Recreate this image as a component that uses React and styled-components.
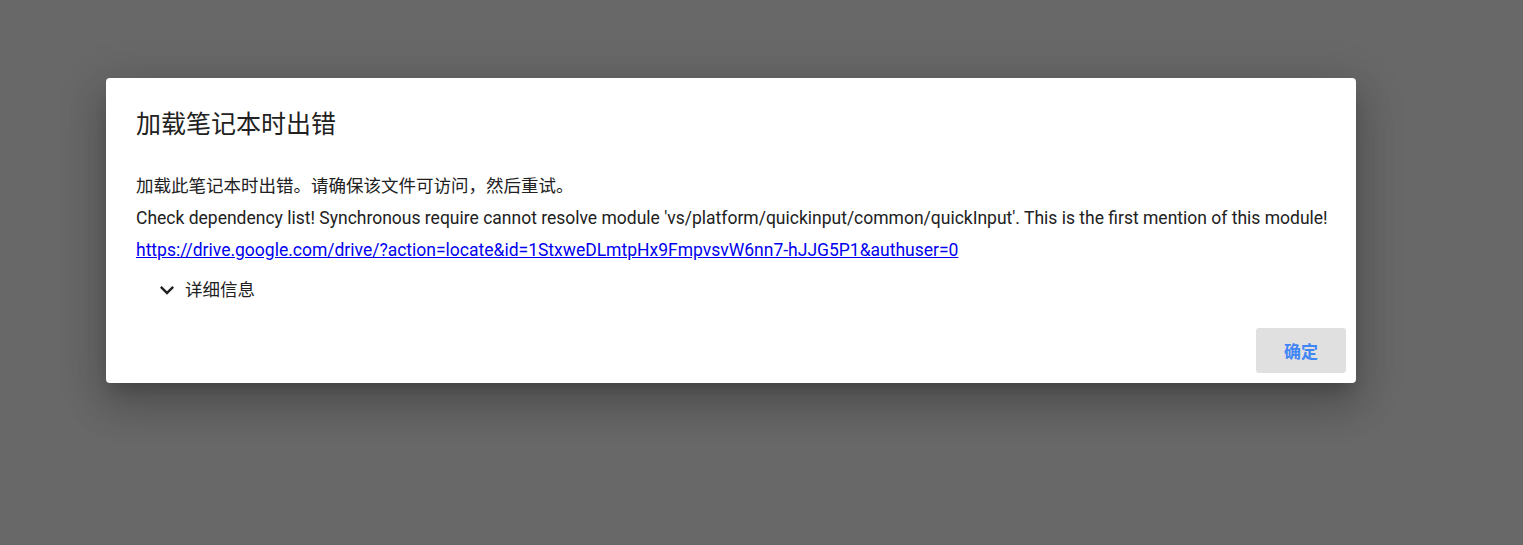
import React from "react";
import styled, { createGlobalStyle } from "styled-components";

const GlobalStyle = createGlobalStyle`
  html, body {
    margin: 0;
    padding: 0;
    background: #686868;
    font-family: Roboto, "Noto Sans CJK SC", sans-serif;
  }
`;

const Backdrop = styled.div`
  width: 1523px;
  height: 545px;
  padding: 78px 0 0 106px;
  box-sizing: border-box;
`;

const Dialog = styled.div`
  width: 1250px;
  height: 305px;
  box-sizing: border-box;
  background: #fff;
  border-radius: 4px;
  box-shadow: 0 24px 38px 3px rgba(0, 0, 0, 0.14),
    0 9px 46px 8px rgba(0, 0, 0, 0.12), 0 11px 15px -7px rgba(0, 0, 0, 0.2);
  display: flex;
  flex-direction: column;
  padding: 31px 10px 10px 30px;
`;

const Title = styled.h2`
  margin: 0;
  font-size: 25px;
  font-weight: 400;
  line-height: 32px;
  color: #212121;
`;

const Body = styled.div`
  margin-top: 29px;
  font-size: 17.5px;
  line-height: 32px;
  color: #212121;
`;

const Line = styled.div`
  white-space: nowrap;
`;

const Link = styled.a`
  color: #0000ee;
  text-decoration: underline;
`;

const Details = styled.div`
  display: flex;
  align-items: center;
  gap: 4px;
  margin: 10px 0 0 17px;
  font-size: 17.5px;
  line-height: 26px;
  color: #212121;
`;

const Footer = styled.div`
  margin-top: auto;
  display: flex;
  justify-content: flex-end;
`;

const OkButton = styled.button`
  width: 90px;
  height: 45px;
  border: none;
  border-radius: 3px;
  background: #e0e0e0;
  color: #4285f4;
  font-family: Roboto, "Noto Sans CJK SC", sans-serif;
  font-size: 17px;
  font-weight: 700;
`;

const Chevron = () => (
  <svg width="28" height="28" viewBox="0 0 24 24">
    <path d="M7.41 8.59 12 13.17l4.59-4.58L18 10l-6 6-6-6z" fill="#212121" />
  </svg>
);

export default function App() {
  return (
    <>
      <GlobalStyle />
      <Backdrop>
        <Dialog>
          <Title>加载笔记本时出错</Title>
          <Body>
            <Line>加载此笔记本时出错。请确保该文件可访问，然后重试。</Line>
            <Line>
              Check dependency list! Synchronous require cannot resolve module
              'vs/platform/quickinput/common/quickInput'. This is the first
              mention of this module!
            </Line>
            <Line>
              <Link href="#">
                https://drive.google.com/drive/?action=locate&amp;id=1StxweDLmtpHx9FmpvsvW6nn7-hJJG5P1&amp;authuser=0
              </Link>
            </Line>
          </Body>
          <Details>
            <Chevron />
            <span>详细信息</span>
          </Details>
          <Footer>
            <OkButton>确定</OkButton>
          </Footer>
        </Dialog>
      </Backdrop>
    </>
  );
}
